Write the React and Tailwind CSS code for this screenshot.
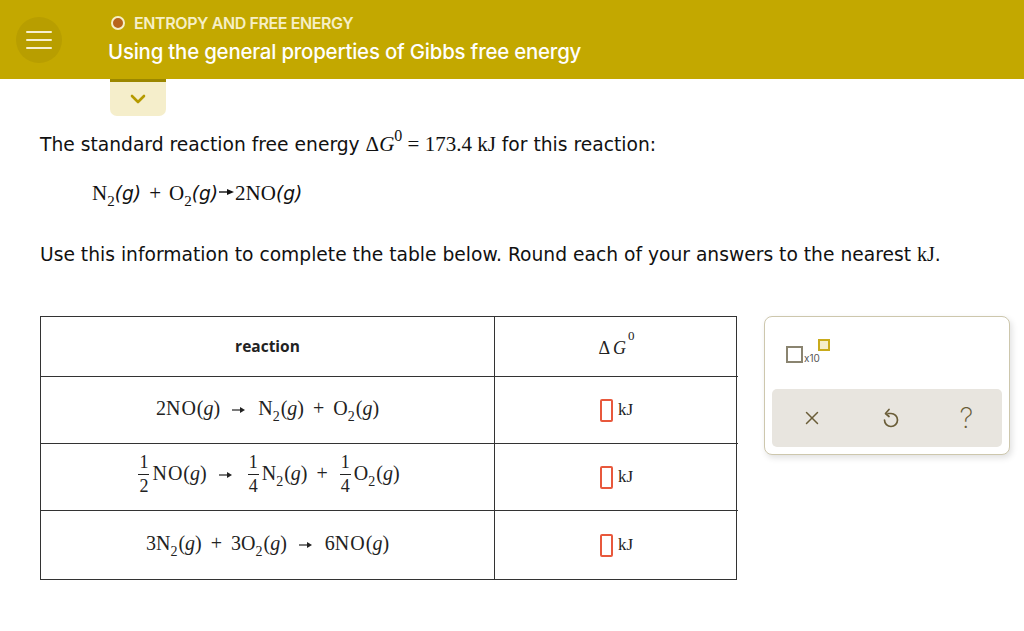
import { X } from "lucide-react";

const serif = { fontFamily: '"Liberation Serif", "Times New Roman", serif' };
const head = { fontFamily: 'Inter, "Liberation Sans", sans-serif' };

function Sub({ children }) {
  return <span className="text-[14px] relative top-[6px]">{children}</span>;
}

function Frac({ n, d }) {
  return (
    <span className="inline-flex flex-col items-center align-middle mx-[3px] text-[18px] leading-[21px] relative -top-[1px]">
      <span className="border-b border-[#222] px-[1px] pb-[1px]">{n}</span>
      <span className="pt-[1px]">{d}</span>
    </span>
  );
}

function Arrow() {
  return (
    <svg width="14" height="8" viewBox="0 0 14 8" className="inline align-middle mx-[12px]">
      <path d="M0 4h9" stroke="#222" strokeWidth="1.2" />
      <path d="M8 1l5 3-5 3z" fill="#222" />
    </svg>
  );
}

function AnswerCell() {
  return (
    <div className="flex items-center justify-center gap-[5px]">
      <div className="w-[13px] h-[23px] border-2 border-[#e8583c] rounded-[2px]" />
      <span className="text-[17px] text-[#222]" style={serif}>kJ</span>
    </div>
  );
}

const G = () => <span className="ml-[1px]">(<i>g</i>)</span>;
const Plus = () => <span className="mx-[9px]">+</span>;

const rows = [
  (
    <>
      2N<span className="ml-[1px]">O</span><G /><Arrow />N<Sub>2</Sub><G /><Plus />O<Sub>2</Sub><G />
    </>
  ),
  (
    <>
      <Frac n="1" d="2" />N<span className="ml-[1px]">O</span><G /><Arrow /><Frac n="1" d="4" />N<Sub>2</Sub><G /><Plus /><Frac n="1" d="4" />O<Sub>2</Sub><G />
    </>
  ),
  (
    <>
      3N<Sub>2</Sub><G /><Plus />3O<Sub>2</Sub><G /><Arrow />6N<span className="ml-[1px]">O</span><G />
    </>
  ),
];

const rowH = ["h-[67px] border-b", "h-[67px] border-b", "h-[68px]"];

export default function App() {
  return (
    <div className="w-[1024px] h-[631px] bg-white overflow-hidden relative" style={{ fontFamily: '"DejaVu Sans", Verdana, sans-serif' }}>
      {/* Header */}
      <div className="h-[79px] bg-[#c3a800] flex items-center">
        <div className="ml-[16px] w-[46px] h-[46px] rounded-full bg-[#b89e00] flex flex-col items-center justify-center gap-[6px]">
          <div className="w-[26px] h-[2px] bg-[#f7f0d0] rounded" />
          <div className="w-[26px] h-[2px] bg-[#f7f0d0] rounded" />
          <div className="w-[26px] h-[2px] bg-[#f7f0d0] rounded" />
        </div>
        <div className="ml-[46px] flex flex-col" style={head}>
          <div className="flex items-center text-[16px] font-semibold text-[#f6efc6] tracking-[-0.4px]">
            <span className="ml-[3px] mr-[9px] w-[14px] h-[14px] rounded-full bg-[#b8641a] border-2 border-[#f6efc6]" />
            ENTROPY AND FREE ENERGY
          </div>
          <div className="mt-[2px] text-[20.4px] font-medium text-white tracking-[-0.2px]">
            Using the general properties of Gibbs free energy
          </div>
        </div>
      </div>
      <div className="ml-[110px] w-[56px] h-[37px] bg-[#f5eecb] border-t-[3px] border-[#9b8700] rounded-b-[7px] flex items-center justify-center">
        <svg width="16" height="10" viewBox="0 0 16 10">
          <path d="M2 2l6 6 6-6" fill="none" stroke="#b59a00" strokeWidth="2.6" strokeLinecap="round" strokeLinejoin="round" />
        </svg>
      </div>

      {/* Problem text */}
      <div className="ml-[40px] mt-[13px] text-[18.7px] text-[#111] flex items-baseline">
        <span>The standard reaction free energy&nbsp;</span>
        <span className="text-[21px]" style={serif}>
          Δ<i>G</i><span className="text-[16px] relative -top-[10px]">0</span> = 173.4 kJ
        </span>
        <span>&nbsp;for this reaction:</span>
      </div>
      <div className="ml-[92px] mt-[17px] text-[18.7px] text-[#111] flex items-baseline">
        <span className="text-[21px]" style={serif}>N</span>
        <span className="text-[15px] relative top-[6px]" style={serif}>2</span>
        <i>(g)</i>
        <span className="text-[21px] mx-[8px]" style={serif}>+</span>
        <span className="text-[21px]" style={serif}>O</span>
        <span className="text-[15px] relative top-[6px]" style={serif}>2</span>
        <i>(g)</i>
        <svg width="15" height="8" viewBox="0 0 15 8" className="mx-[1px] relative -top-[4px]">
          <path d="M0 4h9" stroke="#111" strokeWidth="1.4" />
          <path d="M8 1l7 3-7 3z" fill="#111" />
        </svg>
        <span className="text-[21px]" style={serif}>2NO</span>
        <i>(g)</i>
      </div>
      <div className="ml-[40px] mt-[30px] text-[18.7px] text-[#111] flex items-baseline">
        <span>Use this information to complete the table below. Round each of your answers to the nearest&nbsp;</span>
        <span className="text-[20px]" style={serif}>kJ</span>
        <span>.</span>
      </div>

      {/* Table + tool panel */}
      <div className="flex items-start mt-[47px] ml-[40px]">
        <div className="w-[697px] border border-[#333] grid grid-cols-[454px_243px]">
          <div className="h-[60px] flex items-center justify-center border-r border-b border-[#333] text-[15.5px] font-bold text-[#222]" style={{ fontFamily: '"Open Sans", sans-serif' }}>
            reaction
          </div>
          <div className="h-[60px] flex items-center justify-center border-b border-[#333]">
            <span className="text-[18px] text-[#222] relative top-[2px]" style={serif}>
              Δ<span className="ml-[3px]"><i>G</i></span><span className="text-[13px] relative -top-[14px] ml-[2px]">0</span>
            </span>
          </div>
          {rows.map((r, i) => (
            <div key={i} className="contents">
              <div
                className={`flex items-center justify-center border-r border-[#333] text-[20px] text-[#222] ${rowH[i]}`}
                style={serif}
              >
                <span className="whitespace-nowrap relative -top-[2px]">{r}</span>
              </div>
              <div className={`flex items-center justify-center border-[#333] ${rowH[i]}`}>
                <AnswerCell />
              </div>
            </div>
          ))}
        </div>

        <div className="ml-[27px] w-[246px] h-[139px] border border-[#cdc7ad] rounded-[8px] shadow-[2px_3px_6px_rgba(0,0,0,0.12)] bg-white flex flex-col">
          <div className="h-[72px] relative">
            <div className="absolute left-[21px] top-[29px] w-[17px] h-[17px] border-2 border-[#8a8470]" />
            <span className="absolute left-[39px] top-[34px] text-[10px] text-[#555]" style={head}>x10</span>
            <div className="absolute left-[53px] top-[22px] w-[12px] h-[12px] border-2 border-[#c9ab1c] bg-[#f5eecb]" />
          </div>
          <div className="mx-[7px] h-[58px] bg-[#e8e5df] rounded-[5px] flex items-center justify-around text-[#6a5d38]">
            <X size={22} strokeWidth={1.6} />
            <svg width="22" height="24" viewBox="0 0 22 24" fill="none" stroke="#6a5d38" strokeWidth="1.7" strokeLinecap="round" strokeLinejoin="round">
              <path d="M8 7.5h3a6.5 6.5 0 1 1-6.5 6.5" />
              <path d="M9 3.5l-3.5 4 3.5 3" />
            </svg>
            <span className="text-[28px] font-extralight leading-none" style={head}>?</span>
          </div>
        </div>
      </div>
    </div>
  );
}
